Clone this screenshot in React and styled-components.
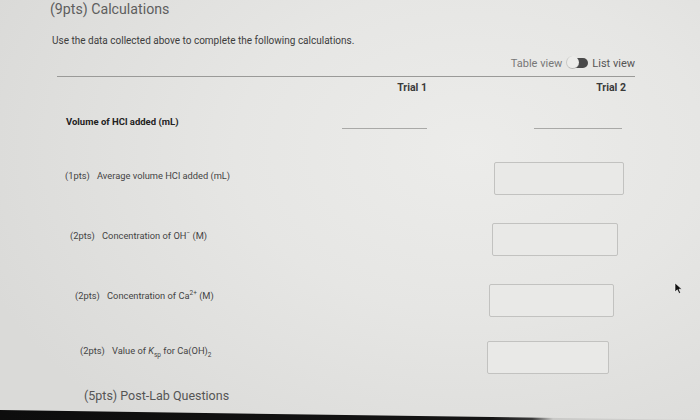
import React from "react";
import styled, { createGlobalStyle } from "styled-components";

const Global = createGlobalStyle`
  html, body { margin: 0; padding: 0; }
  body { font-family: Roboto, "Liberation Sans", Arial, sans-serif; }
`;

const Page = styled.div`
  position: relative;
  width: 700px;
  height: 420px;
  overflow: hidden;
  background:
    radial-gradient(ellipse 520px 360px at 470px 150px, #ececea 0%, #e6e6e4 45%, #dadad8 100%);
  color: #444;
`;

const Title = styled.h2`
  margin: 0 0 0 50px;
  font-size: 14.2px;
  line-height: 19px;
  font-weight: 400;
  color: #5e5e5e;
`;

const Intro = styled.p`
  margin: 14px 0 0 52px;
  font-size: 10px;
  line-height: 16px;
  color: #3d3d3d;
`;

const ToggleRow = styled.div`
  display: flex;
  justify-content: flex-end;
  align-items: center;
  gap: 3px;
  margin: 6px 65px 0 0;
  height: 16px;
  font-size: 11px;
  color: #666;
`;

const ToggleLabel = styled.span`
  color: ${(p) => (p.$active ? "#555" : "#777")};
`;

const Switch = styled.span`
  position: relative;
  display: inline-block;
  width: 22px;
  height: 10px;
  margin: 0 1px;
`;

const Track = styled.span`
  position: absolute;
  right: 0;
  top: 0;
  width: 14px;
  height: 10px;
  border-radius: 2px 5px 5px 2px;
  background: #4a4a4a;
`;

const Knob = styled.span`
  position: absolute;
  left: 0;
  top: -2px;
  width: 13px;
  height: 13px;
  border-radius: 50%;
  background: #ececea;
  border-bottom: 1px solid #b8b8b6;
  border-left: 1px solid #c8c8c6;
  box-sizing: border-box;
`;

const Table = styled.div`
  margin: 5px 0 0 57px;
  width: 578px;
  border-top: 1.5px solid #9a9a98;
`;

const GridRow = styled.div`
  display: grid;
  grid-template-columns: 285px 85px 1fr 88px;
  padding-right: 13px;
  align-items: end;
  padding-top: ${(p) => p.$top}px;
`;

const HeadCell = styled.div`
  grid-column: ${(p) => p.$col};
  text-align: right;
  font-size: 10.5px;
  line-height: 14px;
  font-weight: 700;
  color: #3a3a3a;
  margin-right: ${(p) => p.$nudge || 0}px;
`;

const RowLabel = styled.div`
  grid-column: 1;
  padding-left: 9px;
  font-size: 9.5px;
  line-height: 14px;
  font-weight: 700;
  color: #222;
  align-self: center;
`;

const Blank = styled.div`
  grid-column: ${(p) => p.$col};
  height: 14px;
  border-bottom: 1px solid #a9a9a7;
`;

const CalcList = styled.div`
  display: flex;
  flex-direction: column;
  margin-top: 33px;
`;

const CalcRow = styled.div`
  display: flex;
  align-items: center;
  justify-content: space-between;
  height: 33px;
  margin-bottom: ${(p) => p.$gap}px;
  padding-left: ${(p) => p.$indent}px;
  padding-right: ${(p) => p.$right}px;
`;

const CalcLabel = styled.div`
  font-size: 9.3px;
  color: #444;
  transform: translateY(${(p) => p.$dy}px);
  white-space: pre;
`;

const Points = styled.span`
  margin-right: 5px;
`;

const Sup = styled.sup`
  font-size: 6.5px;
  line-height: 0;
`;

const Sub = styled.sub`
  font-size: 6.5px;
  line-height: 0;
`;

const Italic = styled.i`
  font-style: italic;
`;

const AnswerBox = styled.div`
  width: ${(p) => p.$w}px;
  height: 33px;
  box-sizing: border-box;
  border: 1px solid #c2c2c0;
  border-radius: 2px;
  background: #e9e9e7;
`;

const Section = styled.h3`
  margin: 14px 0 0 84px;
  font-size: 12.5px;
  line-height: 16px;
  font-weight: 400;
  color: #555;
`;

const Bezel = styled.div`
  position: absolute;
  left: 0;
  right: 0;
  bottom: 0;
  height: 12px;
  background: linear-gradient(to right, #0d0d0d 0%, #141414 70%, #3a3a3a 76%, #c9c9c7 79%, #d4d4d2 100%);
  clip-path: polygon(0 2px, 100% 12px, 100% 100%, 0 100%);
`;

const Cursor = styled.svg`
  position: absolute;
  left: 674px;
  top: 282px;
`;

const rows = [
  { pts: "(1pts)", label: <>Average volume HCl added (mL)</>, indent: 65, right: 76, w: 130, dy: -3, gap: 28 },
  { pts: "(2pts)", label: <>Concentration of OH<Sup>−</Sup> (M)</>, indent: 70, right: 82, w: 126, dy: -4, gap: 28 },
  { pts: "(2pts)", label: <>Concentration of Ca<Sup>2+</Sup> (M)</>, indent: 75, right: 86, w: 125, dy: -5, gap: 24 },
  { pts: "(2pts)", label: <>Value of <Italic>K</Italic><Sub>sp</Sub> for Ca(OH)<Sub>2</Sub></>, indent: 80, right: 91, w: 122, dy: -7, gap: 0 },
];

export default function App() {
  return (
    <Page>
      <Global />
      <Title>(9pts) Calculations</Title>
      <Intro>Use the data collected above to complete the following calculations.</Intro>
      <ToggleRow>
        <ToggleLabel>Table view</ToggleLabel>
        <Switch>
          <Track />
          <Knob />
        </Switch>
        <ToggleLabel $active>List view</ToggleLabel>
      </ToggleRow>
      <Table>
        <GridRow $top={4}>
          <HeadCell $col={2}>Trial 1</HeadCell>
          <HeadCell $col={4} $nudge={-4}>Trial 2</HeadCell>
        </GridRow>
        <GridRow $top={19}>
          <RowLabel>Volume of HCl added (mL)</RowLabel>
          <Blank $col={2} />
          <Blank $col={4} />
        </GridRow>
      </Table>
      <CalcList>
        {rows.map((r, i) => (
          <CalcRow key={i} $indent={r.indent} $right={r.right} $gap={r.gap}>
            <CalcLabel $dy={r.dy}>
              <Points>{r.pts}</Points> {r.label}
            </CalcLabel>
            <AnswerBox $w={r.w} />
          </CalcRow>
        ))}
      </CalcList>
      <Section>(5pts) Post-Lab Questions</Section>
      <Cursor width="9" height="12" viewBox="0 0 9 12">
        <path d="M1 1 L1 10 L3.3 7.8 L5 11.5 L6.6 10.8 L5 7.2 L8 7.2 Z" fill="#111" stroke="#fff" strokeWidth="0.6" />
      </Cursor>
      <Bezel />
    </Page>
  );
}
